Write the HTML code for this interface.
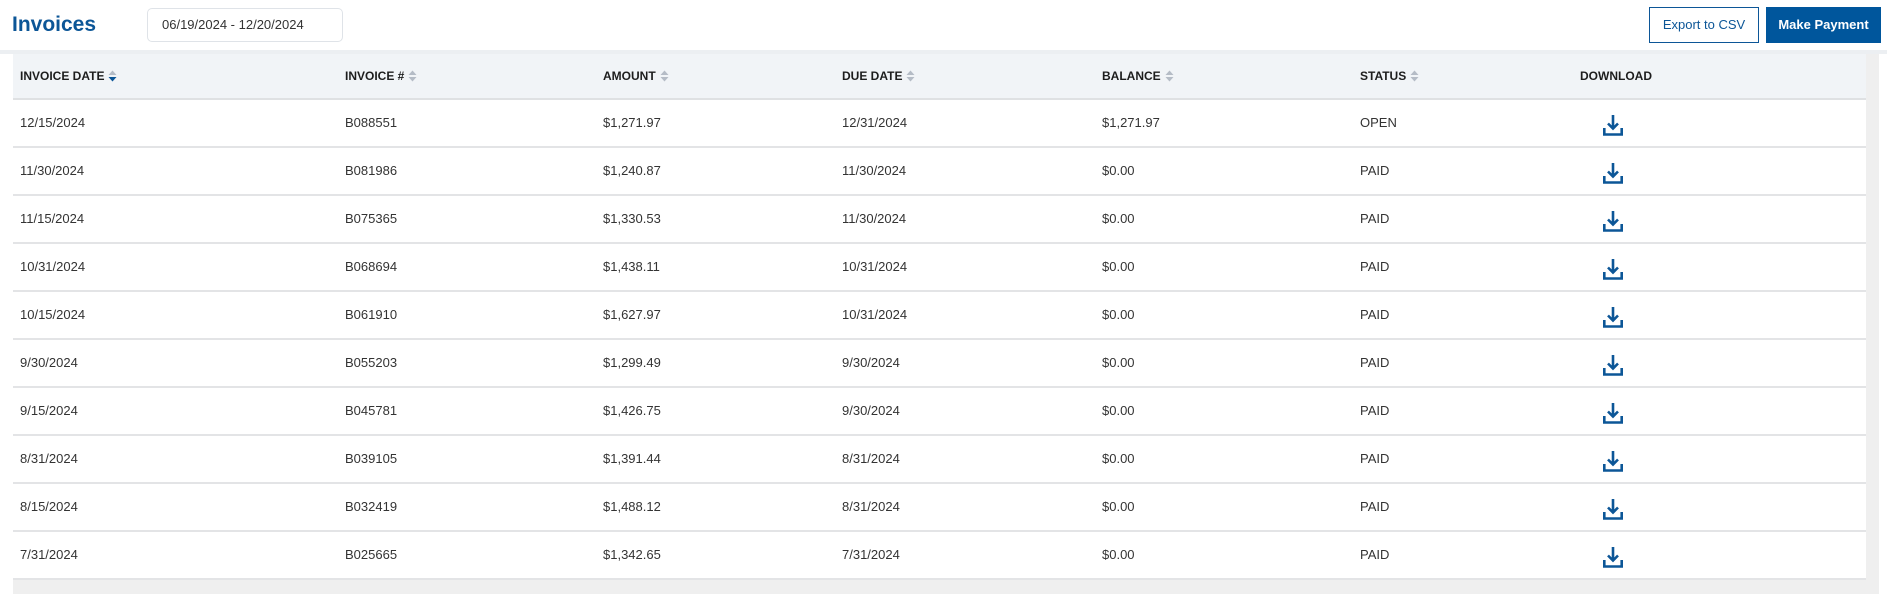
<!DOCTYPE html>
<html><head><meta charset="utf-8"><style>
*{margin:0;padding:0;box-sizing:border-box}
body{width:1887px;height:605px;background:#fff;font-family:"Liberation Sans",Arial,sans-serif;position:relative;overflow:hidden;color:#333}
.title{position:absolute;left:12px;top:13px;font-size:21px;font-weight:bold;color:#0c5697}
.date{position:absolute;left:147px;top:8px;width:196px;height:34px;border:1px solid #dfe3e8;border-radius:5px;font-size:13px;color:#333;padding-left:14px;line-height:32px}
.btn{position:absolute;top:7px;height:36px;font-size:13px;line-height:34px;text-align:center}
.exp{left:1649px;width:110px;border:1px solid #0c5697;color:#0c5697;background:#fff}
.pay{left:1766px;width:115px;background:#00569c;color:#fff;font-weight:bold;line-height:36px}
.band{position:absolute;left:0;top:50px;width:1887px;height:4px;background:#eceff2}
.sb{position:absolute;left:1866px;top:54px;width:13px;height:540px;background:#efefef}
.foot{position:absolute;left:13px;top:580px;width:1853px;height:14px;background:#efefef}
.tbl{position:absolute;left:13px;top:54px;width:1853px}
.hd{height:46px;background:#f1f4f7;border-bottom:2px solid #dfe1e3;position:relative}
.row{height:48px;border-bottom:2px solid #e3e4e6;position:relative;background:#fff}
.c{position:absolute;top:0;line-height:46px;font-size:13px;white-space:nowrap}
.hd .c{font-size:12px;font-weight:bold;color:#1d1d1d;line-height:44px}
.s{display:inline-block;vertical-align:middle;margin-left:4px;margin-top:-2px}
.ic{position:absolute;left:1590px;top:15px}
</style></head><body>
<div class="title">Invoices</div>
<div class="date">06/19/2024 - 12/20/2024</div>
<div class="btn exp">Export to CSV</div>
<div class="btn pay">Make Payment</div>
<div class="band"></div>
<div class="sb"></div>
<div class="foot"></div>
<div class="tbl">
<div class="hd">
<div class="c" style="left:7px">INVOICE DATE<svg class="s" width="9" height="12" viewBox="0 0 9 12"><path d="M0.5 5L4.5 0.5L8.5 5Z" fill="#b5bcc6"/><path d="M0.5 7L4.5 11.5L8.5 7Z" fill="#0c5697"/></svg></div>
<div class="c" style="left:332px">INVOICE #<svg class="s" width="9" height="12" viewBox="0 0 9 12"><path d="M0.5 5L4.5 0.5L8.5 5Z M0.5 7L4.5 11.5L8.5 7Z" fill="#b5bcc6"/></svg></div>
<div class="c" style="left:590px">AMOUNT<svg class="s" width="9" height="12" viewBox="0 0 9 12"><path d="M0.5 5L4.5 0.5L8.5 5Z M0.5 7L4.5 11.5L8.5 7Z" fill="#b5bcc6"/></svg></div>
<div class="c" style="left:829px">DUE DATE<svg class="s" width="9" height="12" viewBox="0 0 9 12"><path d="M0.5 5L4.5 0.5L8.5 5Z M0.5 7L4.5 11.5L8.5 7Z" fill="#b5bcc6"/></svg></div>
<div class="c" style="left:1089px">BALANCE<svg class="s" width="9" height="12" viewBox="0 0 9 12"><path d="M0.5 5L4.5 0.5L8.5 5Z M0.5 7L4.5 11.5L8.5 7Z" fill="#b5bcc6"/></svg></div>
<div class="c" style="left:1347px">STATUS<svg class="s" width="9" height="12" viewBox="0 0 9 12"><path d="M0.5 5L4.5 0.5L8.5 5Z M0.5 7L4.5 11.5L8.5 7Z" fill="#b5bcc6"/></svg></div>
<div class="c" style="left:1567px">DOWNLOAD</div>
</div>
</div>
<div class="tbl" style="top:100px">
<div class="row"><div class="c" style="left:7px">12/15/2024</div><div class="c" style="left:332px">B088551</div><div class="c" style="left:590px">$1,271.97</div><div class="c" style="left:829px">12/31/2024</div><div class="c" style="left:1089px">$1,271.97</div><div class="c" style="left:1347px">OPEN</div><svg class="ic" width="20" height="21" viewBox="0 0 20 21"><path d="M10 0V13M5 8.5L10 13.5L15 8.5" stroke="#0c5697" stroke-width="2.6" fill="none"/><path d="M1.3 13V19.5H18.7V13" stroke="#0c5697" stroke-width="2.6" fill="none"/></svg></div>
<div class="row"><div class="c" style="left:7px">11/30/2024</div><div class="c" style="left:332px">B081986</div><div class="c" style="left:590px">$1,240.87</div><div class="c" style="left:829px">11/30/2024</div><div class="c" style="left:1089px">$0.00</div><div class="c" style="left:1347px">PAID</div><svg class="ic" width="20" height="21" viewBox="0 0 20 21"><path d="M10 0V13M5 8.5L10 13.5L15 8.5" stroke="#0c5697" stroke-width="2.6" fill="none"/><path d="M1.3 13V19.5H18.7V13" stroke="#0c5697" stroke-width="2.6" fill="none"/></svg></div>
<div class="row"><div class="c" style="left:7px">11/15/2024</div><div class="c" style="left:332px">B075365</div><div class="c" style="left:590px">$1,330.53</div><div class="c" style="left:829px">11/30/2024</div><div class="c" style="left:1089px">$0.00</div><div class="c" style="left:1347px">PAID</div><svg class="ic" width="20" height="21" viewBox="0 0 20 21"><path d="M10 0V13M5 8.5L10 13.5L15 8.5" stroke="#0c5697" stroke-width="2.6" fill="none"/><path d="M1.3 13V19.5H18.7V13" stroke="#0c5697" stroke-width="2.6" fill="none"/></svg></div>
<div class="row"><div class="c" style="left:7px">10/31/2024</div><div class="c" style="left:332px">B068694</div><div class="c" style="left:590px">$1,438.11</div><div class="c" style="left:829px">10/31/2024</div><div class="c" style="left:1089px">$0.00</div><div class="c" style="left:1347px">PAID</div><svg class="ic" width="20" height="21" viewBox="0 0 20 21"><path d="M10 0V13M5 8.5L10 13.5L15 8.5" stroke="#0c5697" stroke-width="2.6" fill="none"/><path d="M1.3 13V19.5H18.7V13" stroke="#0c5697" stroke-width="2.6" fill="none"/></svg></div>
<div class="row"><div class="c" style="left:7px">10/15/2024</div><div class="c" style="left:332px">B061910</div><div class="c" style="left:590px">$1,627.97</div><div class="c" style="left:829px">10/31/2024</div><div class="c" style="left:1089px">$0.00</div><div class="c" style="left:1347px">PAID</div><svg class="ic" width="20" height="21" viewBox="0 0 20 21"><path d="M10 0V13M5 8.5L10 13.5L15 8.5" stroke="#0c5697" stroke-width="2.6" fill="none"/><path d="M1.3 13V19.5H18.7V13" stroke="#0c5697" stroke-width="2.6" fill="none"/></svg></div>
<div class="row"><div class="c" style="left:7px">9/30/2024</div><div class="c" style="left:332px">B055203</div><div class="c" style="left:590px">$1,299.49</div><div class="c" style="left:829px">9/30/2024</div><div class="c" style="left:1089px">$0.00</div><div class="c" style="left:1347px">PAID</div><svg class="ic" width="20" height="21" viewBox="0 0 20 21"><path d="M10 0V13M5 8.5L10 13.5L15 8.5" stroke="#0c5697" stroke-width="2.6" fill="none"/><path d="M1.3 13V19.5H18.7V13" stroke="#0c5697" stroke-width="2.6" fill="none"/></svg></div>
<div class="row"><div class="c" style="left:7px">9/15/2024</div><div class="c" style="left:332px">B045781</div><div class="c" style="left:590px">$1,426.75</div><div class="c" style="left:829px">9/30/2024</div><div class="c" style="left:1089px">$0.00</div><div class="c" style="left:1347px">PAID</div><svg class="ic" width="20" height="21" viewBox="0 0 20 21"><path d="M10 0V13M5 8.5L10 13.5L15 8.5" stroke="#0c5697" stroke-width="2.6" fill="none"/><path d="M1.3 13V19.5H18.7V13" stroke="#0c5697" stroke-width="2.6" fill="none"/></svg></div>
<div class="row"><div class="c" style="left:7px">8/31/2024</div><div class="c" style="left:332px">B039105</div><div class="c" style="left:590px">$1,391.44</div><div class="c" style="left:829px">8/31/2024</div><div class="c" style="left:1089px">$0.00</div><div class="c" style="left:1347px">PAID</div><svg class="ic" width="20" height="21" viewBox="0 0 20 21"><path d="M10 0V13M5 8.5L10 13.5L15 8.5" stroke="#0c5697" stroke-width="2.6" fill="none"/><path d="M1.3 13V19.5H18.7V13" stroke="#0c5697" stroke-width="2.6" fill="none"/></svg></div>
<div class="row"><div class="c" style="left:7px">8/15/2024</div><div class="c" style="left:332px">B032419</div><div class="c" style="left:590px">$1,488.12</div><div class="c" style="left:829px">8/31/2024</div><div class="c" style="left:1089px">$0.00</div><div class="c" style="left:1347px">PAID</div><svg class="ic" width="20" height="21" viewBox="0 0 20 21"><path d="M10 0V13M5 8.5L10 13.5L15 8.5" stroke="#0c5697" stroke-width="2.6" fill="none"/><path d="M1.3 13V19.5H18.7V13" stroke="#0c5697" stroke-width="2.6" fill="none"/></svg></div>
<div class="row"><div class="c" style="left:7px">7/31/2024</div><div class="c" style="left:332px">B025665</div><div class="c" style="left:590px">$1,342.65</div><div class="c" style="left:829px">7/31/2024</div><div class="c" style="left:1089px">$0.00</div><div class="c" style="left:1347px">PAID</div><svg class="ic" width="20" height="21" viewBox="0 0 20 21"><path d="M10 0V13M5 8.5L10 13.5L15 8.5" stroke="#0c5697" stroke-width="2.6" fill="none"/><path d="M1.3 13V19.5H18.7V13" stroke="#0c5697" stroke-width="2.6" fill="none"/></svg></div>
</div>
</body></html>
